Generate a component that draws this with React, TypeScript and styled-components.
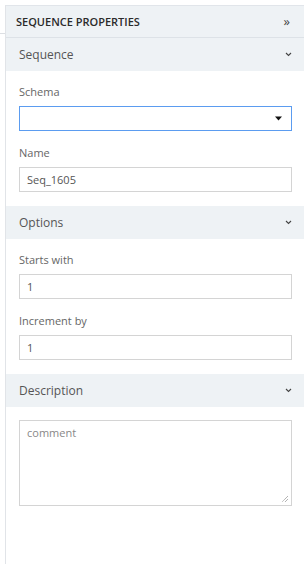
import styled, { createGlobalStyle } from "styled-components"

const Global = createGlobalStyle`
  html, body {
    margin: 0;
    padding: 0;
    background: #fff;
    font-family: "Open Sans", "Liberation Sans", sans-serif;
  }
`

const Page = styled.div`
  display: flex;
  height: 564px;
  padding-top: 5px;
  box-sizing: border-box;
  background: #fff;
`

const Gutter = styled.div`
  width: 5px;
  flex-shrink: 0;
  border-right: 1px solid #e1e4e8;
`

const GutterTab = styled.div`
  height: 28px;
  border-bottom: 1px solid #dcdfe3;
`

const Panel = styled.div`
  flex: 1;
  display: flex;
  flex-direction: column;
  border-top: 1px solid #e1e5ea;
`

const Header = styled.div`
  height: 31px;
  display: flex;
  align-items: center;
  justify-content: space-between;
  padding: 0 14px 0 10px;
  background: #eef2f5;
  border-bottom: 1px solid #dde2e7;
  font-size: 11px;
  font-weight: 600;
  color: #2b2b2b;
`

const Collapse = styled.span`
  font-size: 13px;
  font-weight: 400;
  color: #444;
  line-height: 1;
`

const SectionHead = styled.div`
  height: 33px;
  display: flex;
  align-items: center;
  justify-content: space-between;
  padding: 0 12px 0 13px;
  background: #eef2f5;
  font-size: 12px;
  color: #555;
`

const Body = styled.div<{ pt: number; pb: number }>`
  display: flex;
  flex-direction: column;
  padding: ${({ pt }) => pt}px 12px ${({ pb }) => pb}px 13px;
`

const Label = styled.div`
  font-size: 11px;
  color: #666;
  line-height: 15px;
  margin-bottom: 7px;
`

const Field = styled.div<{ gap?: number }>`
  margin-bottom: ${({ gap }) => gap ?? 0}px;
`

const Input = styled.div`
  height: 25px;
  box-sizing: border-box;
  border: 1px solid #d4d4d4;
  display: flex;
  align-items: center;
  padding: 0 7px;
  font-size: 11px;
  color: #555;
`

const Select = styled(Input)`
  border-color: #5b9cf0;
  justify-content: flex-end;
  padding: 0 9px;
`

const TextArea = styled.div`
  position: relative;
  height: 86px;
  box-sizing: border-box;
  border: 1px solid #d4d4d4;
  padding: 4px 7px;
  font-size: 11px;
  color: #888;
`

const Grip = styled.svg`
  position: absolute;
  right: 2px;
  bottom: 2px;
`

const Chevron = () => (
  <svg width="7" height="5" viewBox="0 0 7 5">
    <path d="M1 1 L3.5 3.5 L6 1" fill="none" stroke="#444" strokeWidth="1.1" />
  </svg>
)

const Caret = () => (
  <svg width="7" height="5" viewBox="0 0 7 5">
    <path d="M0 0.5 H7 L3.5 4.5 Z" fill="#111" />
  </svg>
)

export default function App() {
  return (
    <>
      <Global />
      <Page>
        <Gutter>
          <GutterTab />
        </Gutter>
        <Panel>
          <Header>
            <span>SEQUENCE PROPERTIES</span>
            <Collapse>»</Collapse>
          </Header>

          <SectionHead>
            <span>Sequence</span>
            <Chevron />
          </SectionHead>
          <Body pt={13} pb={14}>
            <Field gap={14}>
              <Label>Schema</Label>
              <Select>
                <Caret />
              </Select>
            </Field>
            <Field>
              <Label>Name</Label>
              <Input>Seq_1605</Input>
            </Field>
          </Body>

          <SectionHead>
            <span>Options</span>
            <Chevron />
          </SectionHead>
          <Body pt={13} pb={14}>
            <Field gap={14}>
              <Label>Starts with</Label>
              <Input>1</Input>
            </Field>
            <Field>
              <Label>Increment by</Label>
              <Input>1</Input>
            </Field>
          </Body>

          <SectionHead>
            <span>Description</span>
            <Chevron />
          </SectionHead>
          <Body pt={13} pb={0}>
            <TextArea>
              comment
              <Grip width="8" height="8" viewBox="0 0 8 8">
                <path d="M7 1 L1 7 M7 4 L4 7" stroke="#777" strokeWidth="0.8" strokeDasharray="1 0.6" />
              </Grip>
            </TextArea>
          </Body>
        </Panel>
      </Page>
    </>
  )
}
